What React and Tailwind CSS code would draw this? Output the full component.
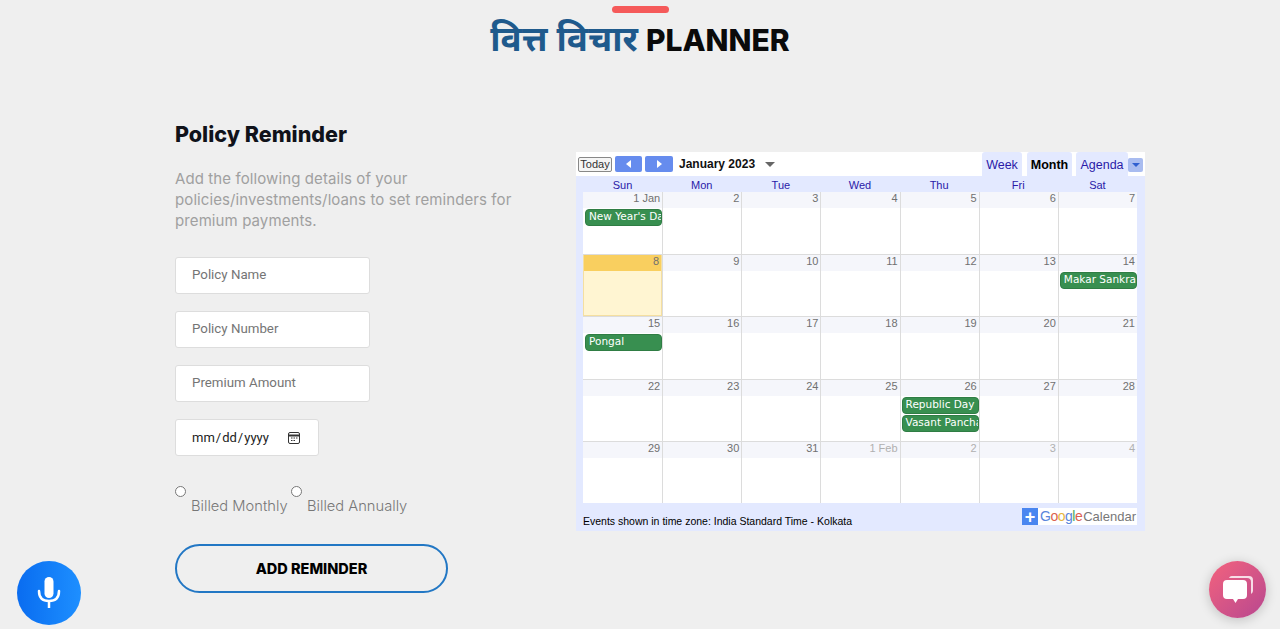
const SANS = 'font-["Inter","Noto_Sans",sans-serif]';

const weeks = [
  [['1 Jan'], ['2'], ['3'], ['4'], ['5'], ['6'], ['7']],
  [['8'], ['9'], ['10'], ['11'], ['12'], ['13'], ['14']],
  [['15'], ['16'], ['17'], ['18'], ['19'], ['20'], ['21']],
  [['22'], ['23'], ['24'], ['25'], ['26'], ['27'], ['28']],
  [['29'], ['30'], ['31'], ['1 Feb', true], ['2', true], ['3', true], ['4', true]],
];

const events = {
  '1 Jan': ["New Year's Day"],
  14: ['Makar Sankranti'],
  15: ['Pongal'],
  26: ['Republic Day', 'Vasant Panchami'],
};

const days = ['Sun', 'Mon', 'Tue', 'Wed', 'Thu', 'Fri', 'Sat'];

function DayCell({ label, muted, first }) {
  const isToday = label === '8';
  const list = events[label] || [];
  return (
    <div className={`flex flex-col min-w-0 ${first ? '' : 'border-l border-[#dcdcdc]'} ${isToday ? 'bg-[#fff5d2] border border-t-0 border-[#f5dfa0]' : 'bg-white'}`}>
      <div className={`h-[16px] pr-[2px] text-right text-[11px] leading-[13px] ${isToday ? 'bg-[#f9cf5f] text-[#777]' : 'bg-[#f5f6fb]'} ${muted ? 'text-[#b0b0b0]' : 'text-[#707070]'}`}>
        {label}
      </div>
      <div className={`flex flex-col gap-[1px] pt-[1px] ${first ? 'pl-[1px]' : ''}`}>
        {list.map((name) => (
          <div
            key={name}
            className='h-[17px] ml-[1px] overflow-hidden whitespace-nowrap rounded-[4px] border border-[#2f7d44] bg-[#388f50] pl-[3px] font-["DejaVu_Sans",sans-serif] text-[10.5px] leading-[13px] text-white'
          >
            {name}
          </div>
        ))}
      </div>
    </div>
  );
}

function Calendar() {
  return (
    <div className='w-[569px] h-[379px] flex flex-col bg-[#e3e9ff] font-["Liberation_Sans",Arial,sans-serif]'>
      <div className="h-[24px] bg-white flex items-start pl-[2px] shrink-0">
        <button className="mt-[5px] h-[15px] w-[34px] border border-[#888] rounded-[2px] bg-[#f5f5f5] text-[11px] leading-[13px] text-[#333]">
          Today
        </button>
        <button className="ml-[3px] mt-[4px] h-[16px] w-[27px] rounded-[2px] bg-[#668cee] flex items-center justify-center">
          <span className="w-0 h-0 border-y-[4px] border-y-transparent border-r-[5px] border-r-white" />
        </button>
        <button className="ml-[3px] mt-[4px] h-[16px] w-[28px] rounded-[2px] bg-[#668cee] flex items-center justify-center">
          <span className="w-0 h-0 border-y-[4px] border-y-transparent border-l-[5px] border-l-white" />
        </button>
        <span className="ml-[6px] mt-[5px] text-[12px] leading-[14px] font-bold text-[#111]">January 2023</span>
        <span className="ml-[10px] mt-[10px] w-0 h-0 border-x-[5px] border-x-transparent border-t-[5px] border-t-[#666]" />
        <div className="ml-auto flex items-start">
          <span className="w-[40px] h-[24px] rounded-t-[3px] bg-[#e3e9ff] text-center text-[12.5px] leading-[26px] text-[#2a1aa8]">Week</span>
          <span className="ml-[5px] w-[45px] h-[24px] rounded-t-[3px] bg-[#e3e9ff] text-center text-[12.5px] leading-[26px] font-bold text-black">Month</span>
          <span className="ml-[4px] w-[52px] h-[24px] rounded-t-[3px] bg-[#e3e9ff] text-center text-[12.5px] leading-[26px] text-[#2a1aa8]">Agenda</span>
          <span className="mt-[6px] mr-[2px] w-[15px] h-[14px] rounded-[2px] bg-[#a9bcf0] flex items-center justify-center">
            <span className="w-0 h-0 border-x-[4px] border-x-transparent border-t-[4px] border-t-[#2f5fd0]" />
          </span>
        </div>
      </div>
      <div className="pl-[7px] pr-[8px] flex-1 flex flex-col">
        <div className="grid grid-cols-7 h-[16px] shrink-0 text-center text-[11px] leading-[19px] text-[#2a1aa8]">
          {days.map((d) => (
            <span key={d}>{d}</span>
          ))}
        </div>
        <div className="grid grid-rows-5 h-[311px] shrink-0">
          {weeks.map((week, i) => (
            <div key={i} className={`grid grid-cols-7 min-h-0 ${i ? 'border-t border-[#dcdcdc]' : ''}`}>
              {week.map(([label, muted], j) => (
                <DayCell key={j} label={label} muted={muted} first={j === 0} />
              ))}
            </div>
          ))}
        </div>
        <div className="flex-1 flex items-start justify-between">
          <span className="mt-[12px] text-[10.5px] leading-[13px] text-black">
            Events shown in time zone: India Standard Time - Kolkata
          </span>
          <div className="mt-[5px] h-[17px] w-[115px] flex items-center bg-white">
            <span className="w-[16px] h-[17px] bg-[#4a86f0] flex items-center justify-center text-white text-[18px] leading-none font-bold">+</span>
            <span className="ml-[2px] text-[14px] tracking-[-0.5px]">
              <span className="text-[#5a86dc]">G</span>
              <span className="text-[#dc5f4e]">o</span>
              <span className="text-[#e6b63e]">o</span>
              <span className="text-[#5a86dc]">g</span>
              <span className="text-[#4fa860]">l</span>
              <span className="text-[#dc5f4e]">e</span>
            </span>
            <span className="ml-[1px] text-[13px] text-[#777]">Calendar</span>
          </div>
        </div>
      </div>
    </div>
  );
}

function Field({ placeholder }) {
  return (
    <input
      type="text"
      placeholder={placeholder}
      className='block w-[195px] h-[37px] rounded-[3px] border border-[#ddd] bg-white pl-[16px] pb-[2px] font-["Roboto",sans-serif] text-[13.300px] outline-none placeholder:text-[#757575]'
    />
  );
}

export default function App() {
  return (
    <div className={`relative h-screen overflow-hidden bg-[#efefef] ${SANS}`}>
      <header className="relative h-[70px] flex justify-center items-start pt-[11px]">
        <span className="absolute left-[612px] top-[6px] w-[57px] h-[7px] rounded-full bg-[#f55a5a]" />
        <h1 className="flex items-baseline gap-[8px] text-[35px] leading-[54px] font-bold">
          <span className='text-[#1f5a8c] font-["Noto_Sans",sans-serif]'>वित्त विचार</span>
          <span className="text-[30px] font-extrabold text-[#0a0a0a]">PLANNER</span>
        </h1>
      </header>

      <main className="flex pl-[175px] pt-[49px]">
        <section className="w-[401px] shrink-0">
          <h2 className="text-[21.5px] leading-[30px] font-extrabold text-[#10121a]">Policy Reminder</h2>
          <p className="mt-[19px] w-[345px] text-[15px] leading-[21px] tracking-[0.1px] text-[#a0a0a0]">
            Add the following details of your policies/investments/loans to set reminders for premium payments.
          </p>
          <form className="mt-[26px]">
            <div className="flex flex-col gap-[17px]">
              <Field placeholder="Policy Name" />
              <Field placeholder="Policy Number" />
              <Field placeholder="Premium Amount" />
              <div className="relative w-[144px]">
                <input
                  type="date"
                  className='block w-[144px] h-[37px] rounded-[3px] border border-[#ddd] bg-white pl-[15px] pr-[16px] font-["Roboto",sans-serif] text-[13px] text-[#222] outline-none [&::-webkit-calendar-picker-indicator]:opacity-0'
                />
                <svg className="absolute left-[112px] top-[12px] pointer-events-none" width="14" height="14" viewBox="0 0 14 14" fill="none" stroke="#333" strokeWidth="1">
                  <rect x="1.500" y="1.500" width="11" height="11" rx="1.500" />
                  <path d="M1.500 4.500h11" strokeWidth="2" />
                  <path d="M4 7h1.500M6.500 7H8M9 7h1.500M4 9.500h1.500M6.500 9.500H8" />
                </svg>
              </div>
            </div>
            <div className="mt-[27px] flex items-start text-[14.700px] leading-[22px] font-light text-[#777]">
              <input type="radio" name="billing" className="mt-[3px] w-[11px] h-[11px]" />
              <label className="ml-[5px] mt-[12px] w-[100px] whitespace-nowrap">Billed Monthly</label>
              <input type="radio" name="billing" className="mt-[3px] w-[11px] h-[11px]" />
              <label className="ml-[5px] mt-[12px] whitespace-nowrap">Billed Annually</label>
            </div>
            <button
              type="button"
              className="mt-[27px] w-[273px] h-[49px] rounded-full border-2 border-[#2277c4] text-[14.500px] font-extrabold text-black"
            >
              ADD REMINDER
            </button>
          </form>
        </section>
        <aside className="mt-[33px] shrink-0">
          <Calendar />
        </aside>
      </main>

      <button className="fixed left-[17px] top-[561px] w-[64px] h-[64px] rounded-full bg-gradient-to-r from-[#0a6cf0] to-[#1e8fff] flex items-center justify-center">
        <svg width="28" height="36" viewBox="0 0 28 36" fill="none" stroke="#fff" strokeWidth="2.500" strokeLinecap="round">
          <rect x="9.500" y="2" width="9" height="21" rx="4.500" fill="#fff" stroke="none" />
          <path d="M4 16c0 7 4 10 10 10s10-3 10-10" />
          <path d="M14 26v7" strokeLinecap="butt" />
        </svg>
      </button>
      <button className="fixed left-[1209px] top-[561px] w-[57px] h-[57px] rounded-full bg-gradient-to-br from-[#f4627c] to-[#b8478f] shadow-[0_2px_12px_rgba(0,0,0,0.2)] flex items-center justify-center">
        <svg width="32" height="32" viewBox="0 0 32 32">
          <path d="M10 2h17a4 4 0 0 1 4 4v11a4 4 0 0 1-2 3V8a4 4 0 0 0-4-4H7a3 3 0 0 1 3-2z" fill="#fff" opacity="0.8" />
          <path d="M5 6h16a4 4 0 0 1 4 4v11a4 4 0 0 1-4 4h-5l-2.500 4-2.500-4H5a4 4 0 0 1-4-4V10a4 4 0 0 1 4-4z" fill="#fff" />
        </svg>
      </button>
    </div>
  );
}
